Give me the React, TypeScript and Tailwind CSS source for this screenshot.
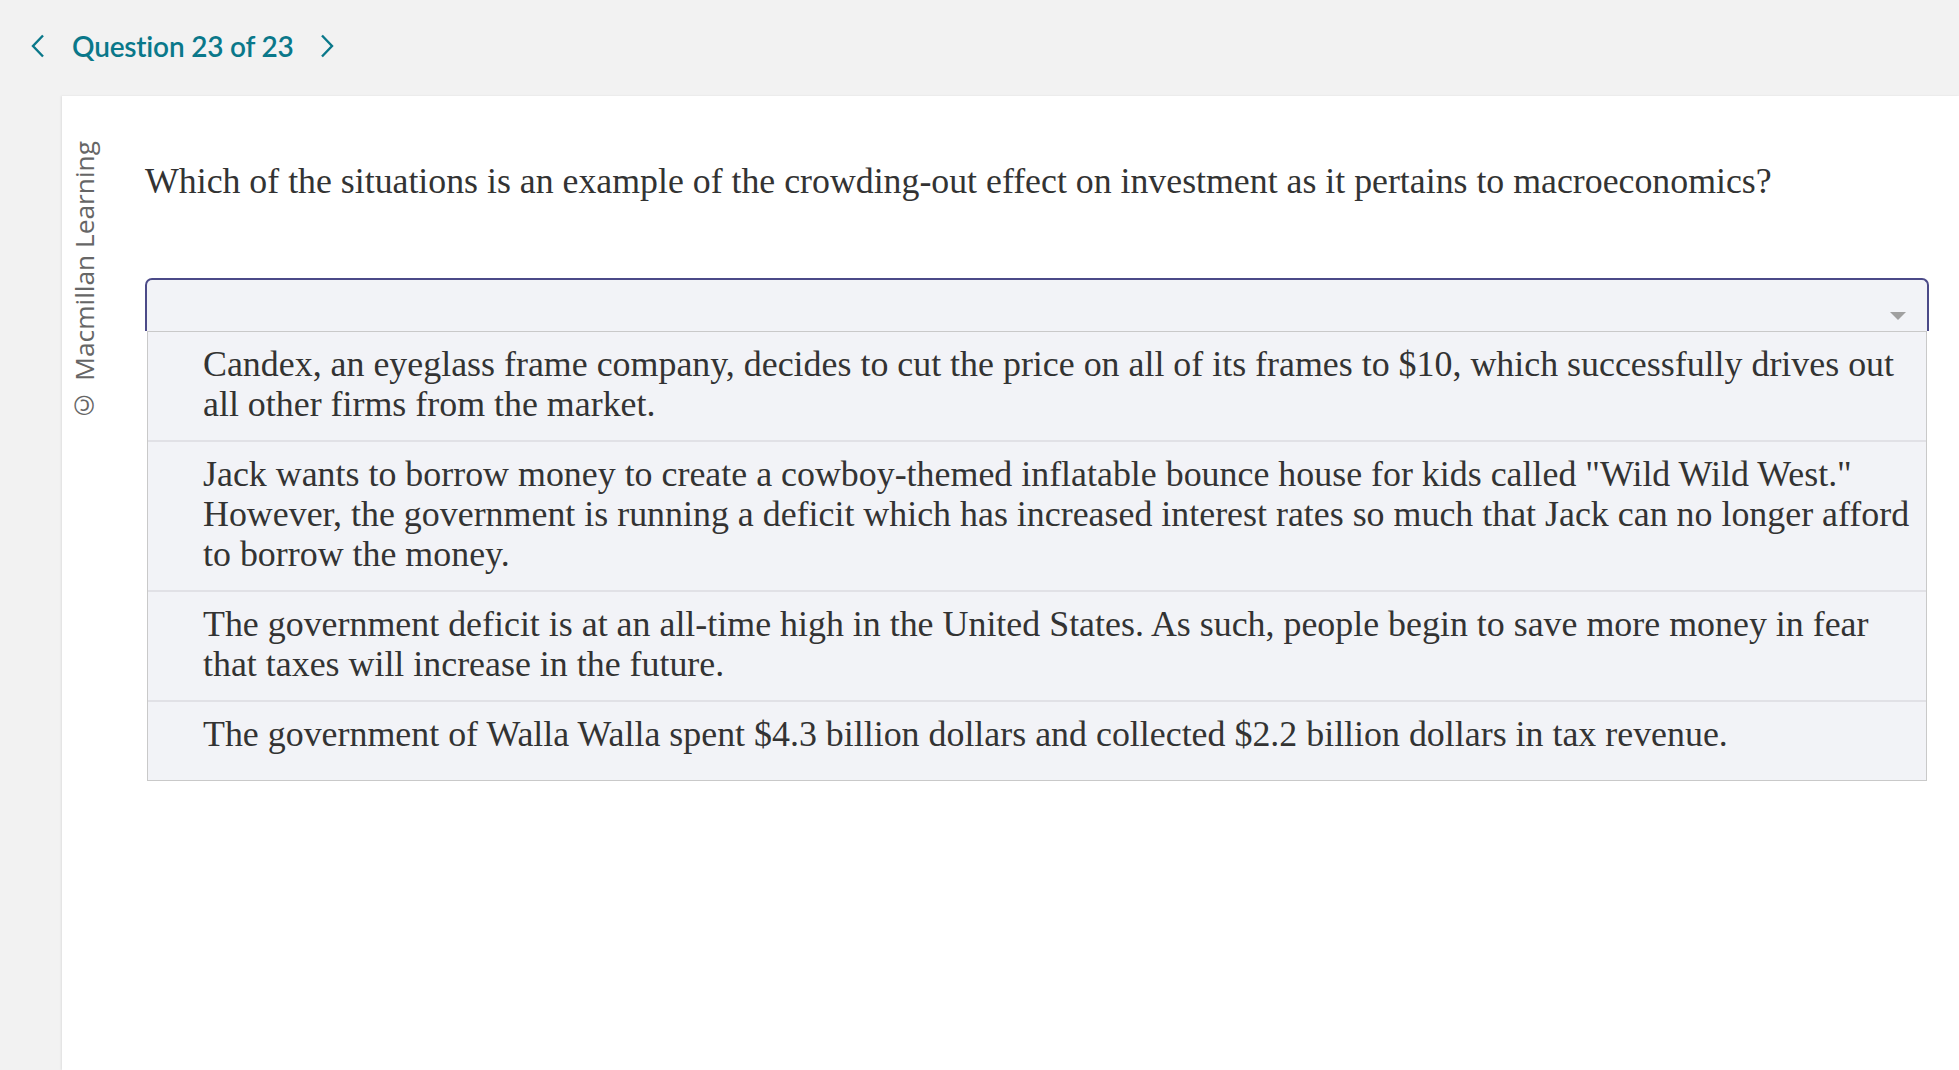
import React from "react";

const options = [
  "Candex, an eyeglass frame company, decides to cut the price on all of its frames to $10, which successfully drives out all other firms from the market.",
  'Jack wants to borrow money to create a cowboy-themed inflatable bounce house for kids called "Wild Wild West." However, the government is running a deficit which has increased interest rates so much that Jack can no longer afford to borrow the money.',
  "The government deficit is at an all-time high in the United States. As such, people begin to save more money in fear that taxes will increase in the future.",
  "The government of Walla Walla spent $4.3 billion dollars and collected $2.2 billion dollars in tax revenue.",
];

export default function App() {
  return (
    <div className="w-full h-[1070px] overflow-hidden bg-[#f2f2f2] flex flex-col">
      <div className="h-[96px] flex items-center pl-[31px] pb-[5px] shrink-0">
        <svg width="14" height="24" viewBox="0 0 14 24">
          <path d="M12 1.5 L2 12 L12 22.5" fill="none" stroke="#0a788a" strokeWidth="2.4" />
        </svg>
        <span className="ml-[27px] text-[28px] font-semibold text-[#0a788a] font-['Lato',sans-serif] tracking-[-0.2px]">
          Question 23 of 23
        </span>
        <svg width="14" height="24" viewBox="0 0 14 24" className="ml-[26px]">
          <path d="M2 1.5 L12 12 L2 22.5" fill="none" stroke="#0a788a" strokeWidth="2.4" />
        </svg>
      </div>
      <div className="flex flex-1">
        <div className="w-[62px] shrink-0" />
        <div className="flex-1 bg-white flex shadow-[-1px_0_2px_rgba(0,0,0,0.08)]">
          <div className="w-[83px] shrink-0 pt-[45px] pl-[5px]">
            <div className="[writing-mode:vertical-rl] rotate-180 text-[26.3px] leading-[34px] text-[#666] font-['Open_Sans',sans-serif]">
              © Macmillan Learning
            </div>
          </div>
          <div className="flex-1 pr-[30px] pt-[65px] font-['Liberation_Serif',serif] text-[#333]">
            <div className="text-[35.8px] leading-[40px]">
              Which of the situations is an example of the crowding-out effect on investment as it pertains to macroeconomics?
            </div>
            <div className="mt-[77px]">
              <div className="relative h-[53px] border-2 border-b-0 border-[#4b4a88] rounded-t-[7px] bg-[#f2f3f7]">
                <div className="absolute right-[21px] top-[32px] w-0 h-0 border-l-[8px] border-r-[8px] border-t-[8px] border-l-transparent border-r-transparent border-t-[#a0a0a0]" />
              </div>
              <div className="mx-[2px] border border-[#c9c9c9] bg-[#f2f3f7] pb-[10px]">
                {options.map((o, i) => (
                  <div
                    key={i}
                    className={
                      "pl-[55px] pr-[4px] pt-[12px] pb-[16px] text-[35.9px] leading-[40px]" +
                      (i > 0 ? " border-t-2 border-[#e1e1e6]" : "")
                    }
                  >
                    {o}
                  </div>
                ))}
              </div>
            </div>
          </div>
        </div>
      </div>
    </div>
  );
}
